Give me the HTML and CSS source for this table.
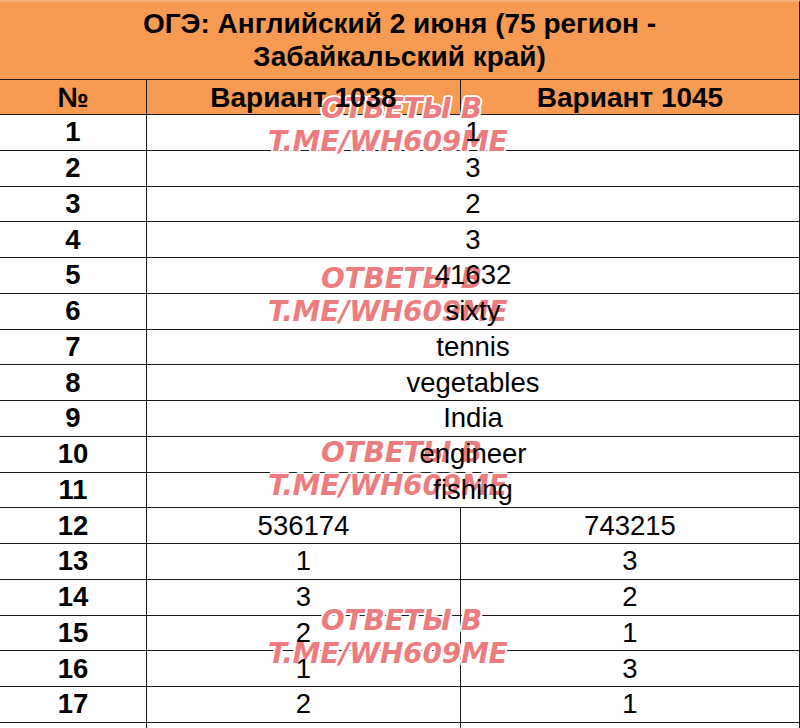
FILE: index.html
```html
<!DOCTYPE html>
<html lang="ru">
<head>
<meta charset="utf-8">
<title>ОГЭ: Английский 2 июня</title>
<link rel="stylesheet" href="styles.css">
</head>
<body>
<div class="page">
  <div class="sheet">
    <div class="cell title"><span class="t">ОГЭ: Английский 2 июня (75 регион -<br>Забайкальский край)</span></div>

    <div class="cell head"><span class="t">№</span></div>
    <div class="cell head"><span class="t">Вариант 1038</span></div>
    <div class="cell head"><span class="t">Вариант 1045</span></div>

    <div class="cell num"><span class="t">1</span></div><div class="cell ans span2"><span class="t">1</span></div>
    <div class="cell num"><span class="t">2</span></div><div class="cell ans span2"><span class="t">3</span></div>
    <div class="cell num"><span class="t">3</span></div><div class="cell ans span2"><span class="t">2</span></div>
    <div class="cell num"><span class="t">4</span></div><div class="cell ans span2"><span class="t">3</span></div>
    <div class="cell num"><span class="t">5</span></div><div class="cell ans span2"><span class="t">41632</span></div>
    <div class="cell num"><span class="t">6</span></div><div class="cell ans span2"><span class="t">sixty</span></div>
    <div class="cell num"><span class="t">7</span></div><div class="cell ans span2"><span class="t">tennis</span></div>
    <div class="cell num"><span class="t">8</span></div><div class="cell ans span2"><span class="t">vegetables</span></div>
    <div class="cell num"><span class="t">9</span></div><div class="cell ans span2"><span class="t">India</span></div>
    <div class="cell num"><span class="t">10</span></div><div class="cell ans span2"><span class="t">engineer</span></div>
    <div class="cell num"><span class="t">11</span></div><div class="cell ans span2"><span class="t">fishing</span></div>

    <div class="cell num"><span class="t">12</span></div><div class="cell ans"><span class="t">536174</span></div><div class="cell ans"><span class="t">743215</span></div>
    <div class="cell num"><span class="t">13</span></div><div class="cell ans"><span class="t">1</span></div><div class="cell ans"><span class="t">3</span></div>
    <div class="cell num"><span class="t">14</span></div><div class="cell ans"><span class="t">3</span></div><div class="cell ans"><span class="t">2</span></div>
    <div class="cell num"><span class="t">15</span></div><div class="cell ans"><span class="t">2</span></div><div class="cell ans"><span class="t">1</span></div>
    <div class="cell num"><span class="t">16</span></div><div class="cell ans"><span class="t">1</span></div><div class="cell ans"><span class="t">3</span></div>
    <div class="cell num"><span class="t">17</span></div><div class="cell ans"><span class="t">2</span></div><div class="cell ans"><span class="t">1</span></div>
    <div class="cell num"></div><div class="cell ans"></div><div class="cell ans"></div>
  </div>

  <div class="wm wm1"><span class="l1">ОТВЕТЫ В</span><span class="l2">T.ME/WH609ME</span></div>
  <div class="wm wm2"><span class="l1">ОТВЕТЫ В</span><span class="l2">T.ME/WH609ME</span></div>
  <div class="wm wm3"><span class="l1">ОТВЕТЫ В</span><span class="l2">T.ME/WH609ME</span></div>
  <div class="wm wm4"><span class="l1">ОТВЕТЫ В</span><span class="l2">T.ME/WH609ME</span></div>
</div>
</body>
</html>
```

FILE: styles.css
```css
html, body {
  margin: 0;
  padding: 0;
  background: #ffffff;
}

.page {
  position: relative;
  width: 800px;
  height: 728px;
  overflow: hidden;
  font-family: "Liberation Sans", Arial, sans-serif;
  color: #000;
}

.sheet {
  display: grid;
  grid-template-columns: 147px 314px 339px;
  grid-template-rows: 80px 35px repeat(18, 35.75px);
}

.cell {
  box-sizing: border-box;
  border-right: 1px solid #1c1c1c;
  border-bottom: 1px solid #1c1c1c;
  display: flex;
  align-items: center;
  justify-content: center;
  text-align: center;
  overflow: hidden;
}

.t {
  position: relative;
  z-index: 2;
}

.title {
  grid-column: 1 / span 3;
  background: #f79a52;
  border-top: 2px solid #f7b27c;
  font-weight: bold;
  font-size: 28px;
  line-height: 33px;
  padding-bottom: 2px;
}

.head {
  background: #f79a52;
  font-weight: bold;
  font-size: 28px;
  padding-top: 2px;
}

.num {
  font-weight: bold;
  font-size: 27.5px;
}

.ans {
  font-size: 27.5px;
}

.span2 {
  grid-column: 2 / span 2;
}

/* watermark overlay */
.wm {
  position: absolute;
  z-index: 1;
  left: 265px;
  width: 270px;
  display: flex;
  flex-direction: column;
  font-family: "DejaVu Sans", sans-serif;
  font-weight: bold;
  font-style: italic;
  font-size: 28px;
  line-height: 33px;
  letter-spacing: -0.2px;
  color: rgba(234, 100, 104, 0.85);
  -webkit-text-stroke: 1.6px rgba(226, 92, 96, 0.9);
  paint-order: stroke fill;
  text-shadow:
    2px 0 0 rgba(255,255,255,0.9), -2px 0 0 rgba(255,255,255,0.9),
    0 2px 0 rgba(255,255,255,0.9), 0 -2px 0 rgba(255,255,255,0.9),
    1.5px 1.5px 0 rgba(255,255,255,0.9), -1.5px -1.5px 0 rgba(255,255,255,0.9),
    1.5px -1.5px 0 rgba(255,255,255,0.9), -1.5px 1.5px 0 rgba(255,255,255,0.9);
  white-space: nowrap;
  pointer-events: none;
}

.wm .l1 {
  padding-left: 56px;
}

.wm .l2 {
  padding-left: 3px;
}

.wm1 { top: 92px; }
.wm2 { top: 262px; }
.wm3 { top: 436px; }
.wm4 { top: 604px; }
```
